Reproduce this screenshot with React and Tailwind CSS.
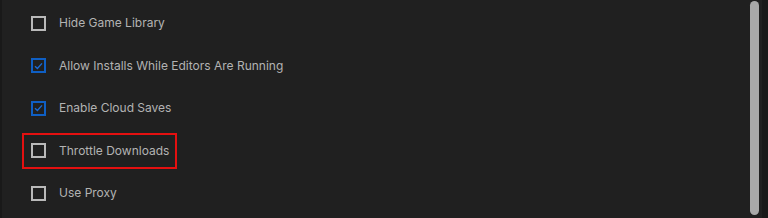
import React from 'react';

const items = [
  { label: 'Hide Game Library', checked: false },
  { label: 'Allow Installs While Editors Are Running', checked: true },
  { label: 'Enable Cloud Saves', checked: true },
  { label: 'Throttle Downloads', checked: false, highlight: true },
  { label: 'Use Proxy', checked: false },
];

function Box({ checked }) {
  if (checked) {
    return (
      <span className="flex h-[15px] w-[15px] items-center justify-center border-2 border-[#0f5fc4]">
        <svg width="9" height="8" viewBox="0 0 9 8" fill="none">
          <path d="M1 4.2 L3.4 6.4 L8 1.4" stroke="#1a6bd6" strokeWidth="1.4" />
        </svg>
      </span>
    );
  }
  return <span className="block h-[15px] w-[15px] border-2 border-[#b9b9b9]" />;
}

export default function App() {
  return (
    <div className="flex h-[218px] w-[768px] bg-[#202020] font-['Inter',sans-serif]">
      <div className="w-[2px] bg-[#191919]" />
      <div className="flex-1 pt-[1.75px]">
        {items.map((it) => (
          <div key={it.label} className="flex h-[42.5px] items-center">
            <div
              className={`ml-[20px] flex h-[36px] items-center pl-[7px] pr-[6px] ${
                it.highlight ? 'border-2 border-[#e41010]' : 'border-2 border-transparent'
              }`}
            >
              <Box checked={it.checked} />
              <span className="ml-[13px] text-[12px] text-[#b3b3b3]">{it.label}</span>
            </div>
          </div>
        ))}
      </div>
      <div className="flex w-[12px] justify-start pt-[1px] pb-[3px]">
        <div className="w-[9px] rounded-full bg-[#a9a9a9]" />
      </div>
      <div className="w-[6px] bg-[#191919]" />
    </div>
  );
}
